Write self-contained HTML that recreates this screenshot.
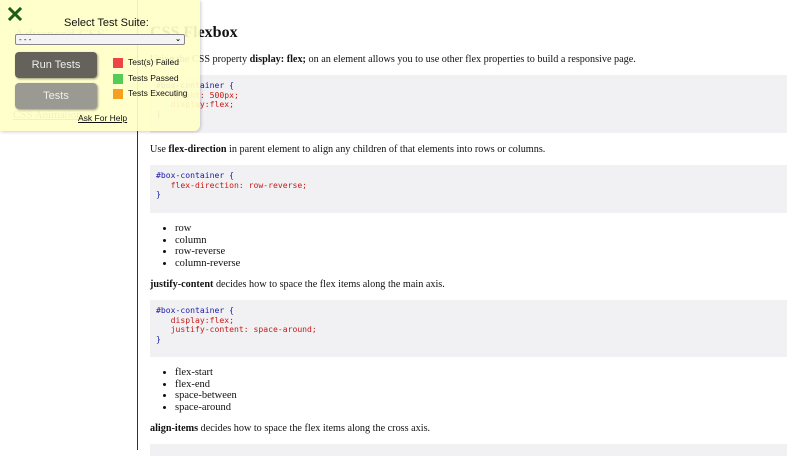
<!DOCTYPE html>
<html><head><meta charset="utf-8"><style>
*{margin:0;padding:0;box-sizing:border-box}
body{width:800px;height:450px;overflow:hidden;background:#fff;font-family:"Liberation Serif",serif;color:#111;position:relative}
.a{position:absolute;white-space:nowrap}
.side{position:absolute;left:137px;top:0;width:1px;height:450px;background:#333}
.t{font-size:10.2px}
.code{position:absolute;left:150px;width:637px;background:#f1f1f4;font-family:"DejaVu Sans Mono","Liberation Mono",monospace;font-size:8.1px;line-height:9.5px;padding:6px 6px;color:#c41a16;white-space:pre}
.code .b{color:#1a1aa6}
ul{position:absolute;left:175px;font-size:10.5px;line-height:11.5px;list-style:disc}
.ov{position:absolute;left:0;top:0;width:200px;height:131px;background:rgba(255,255,200,0.92);border-radius:0 0 6px 0;box-shadow:1px 1px 3px rgba(0,0,0,0.2);font-family:"Liberation Sans",sans-serif}
.btn{position:absolute;left:15px;width:82px;height:26px;border-radius:4px;color:#eee;font-size:11px;text-align:center;line-height:26px;box-shadow:1px 1px 2px rgba(0,0,0,.4)}
.sq{position:absolute;left:113px;width:10px;height:10px}
.lg{position:absolute;left:128px;font-size:8.5px;color:#111}
</style></head><body>
<div class="a" style="left:14px;top:27px;font-size:15px;color:#555">Advanced CSS</div>
<div class="a" style="left:13px;top:109px;font-size:11px;color:#555;text-decoration:underline">CSS Animations</div>
<div class="side"></div>

<div class="a" style="left:150px;top:24px;font-size:16px;font-weight:bold">CSS Flexbox</div>
<div class="a t" style="left:150px;top:54px">Using the CSS property <b>display: flex;</b> on an element allows you to use other flex properties to build a responsive page.</div>
<div class="code" style="top:75px;height:58px"><span class="b">#box-container {</span>
   height: 500px;
   display:flex;
<span class="b">}</span></div>
<div class="a t" style="left:150px;top:144px">Use <b>flex-direction</b> in parent element to align any children of that elements into rows or columns.</div>
<div class="code" style="top:165px;height:48px"><span class="b">#box-container {</span>
   flex-direction: row-reverse;
<span class="b">}</span></div>
<ul style="top:223px"><li>row</li><li>column</li><li>row-reverse</li><li>column-reverse</li></ul>
<div class="a t" style="left:150px;top:279px"><b>justify-content</b> decides how to space the flex items along the main axis.</div>
<div class="code" style="top:300px;height:57px"><span class="b">#box-container {</span>
   display:flex;
   justify-content: space-around;
<span class="b">}</span></div>
<ul style="top:367px"><li>flex-start</li><li>flex-end</li><li>space-between</li><li>space-around</li></ul>
<div class="a t" style="left:150px;top:423px"><b>align-items</b> decides how to space the flex items along the cross axis.</div>
<div class="code" style="top:444px;height:10px"></div>

<div class="ov">
  <svg style="position:absolute;left:8px;top:7px" width="14" height="14" viewBox="0 0 14 14"><path d="M2 2L12 12M12 2L2 12" stroke="#1a5e1a" stroke-width="3" stroke-linecap="square"/></svg>
  <div class="a" style="left:64px;top:17px;font-size:11px;color:#111">Select Test Suite:</div>
  <div style="position:absolute;left:15px;top:34px;width:170px;height:11px;background:#f4f4f4;border:1px solid #888;border-radius:2px;font-size:8px;line-height:9px;padding-left:3px">- - -<span style="position:absolute;right:3px;top:0;font-size:7px;font-weight:bold">&#8964;</span></div>
  <div class="btn" style="top:52px;background:#64625a">Run Tests</div>
  <div class="btn" style="top:83px;background:#9b9a92">Tests</div>
  <div class="sq" style="top:58px;background:#ee4444"></div>
  <div class="sq" style="top:74px;background:#55cc55"></div>
  <div class="sq" style="top:89px;background:#f5a020"></div>
  <div class="lg" style="top:57px">Test(s) Failed</div>
  <div class="lg" style="top:73px">Tests Passed</div>
  <div class="lg" style="top:88px">Tests Executing</div>
  <div class="a" style="left:78px;top:113px;font-size:8.5px;text-decoration:underline;color:#111">Ask For Help</div>
</div>
</body></html>
